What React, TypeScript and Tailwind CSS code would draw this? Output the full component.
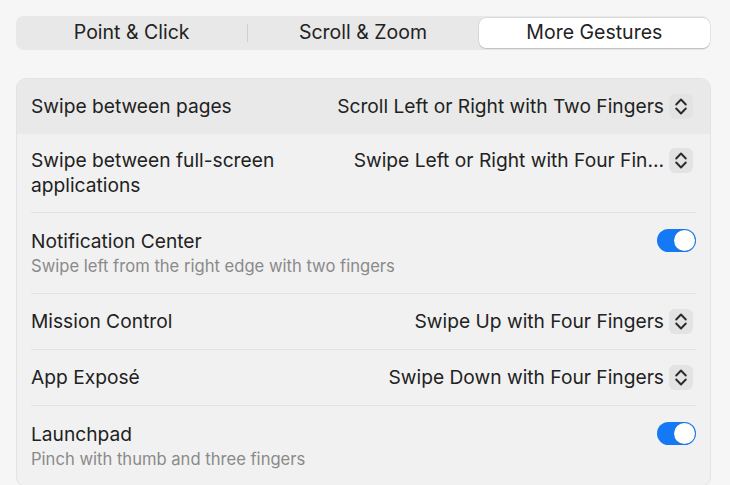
import React from "react";

function Stepper() {
  return (
    <div className="ml-[5px] mr-[3px] flex h-[25px] w-[24px] shrink-0 items-center justify-center rounded-[6px] bg-[#e3e3e3]">
      <svg width="14" height="19" viewBox="0 0 14 19" fill="none">
        <path d="M2.2 7.5 L7 2.5 L11.8 7.5" stroke="#2a2a2a" strokeWidth="1.9" strokeLinecap="round" strokeLinejoin="round" />
        <path d="M2.2 11.5 L7 16.5 L11.8 11.5" stroke="#2a2a2a" strokeWidth="1.9" strokeLinecap="round" strokeLinejoin="round" />
      </svg>
    </div>
  );
}

function Toggle() {
  return (
    <div className="flex h-[23px] w-[39px] shrink-0 items-center justify-end rounded-full bg-[#1579f6] pr-[1px]">
      <div className="h-[21px] w-[21px] rounded-full bg-white shadow-[0_0_1px_rgba(0,0,0,0.3)]" />
    </div>
  );
}

function Divider() {
  return <div className="mx-[14px] h-px bg-[#e3e3e3]" />;
}

export default function App() {
  return (
    <div
      className="h-[485px] w-[730px] overflow-hidden bg-[#f6f6f6] px-4 pt-4 text-[#222222]"
      style={{ fontFamily: "Inter, 'Noto Sans', sans-serif" }}
    >
      <div className="grid h-[34px] w-[694px] grid-cols-3 items-center rounded-[8px] bg-[#e8e8e8] text-[19.5px]">
        <div className="flex h-full items-center justify-center">Point &amp; Click</div>
        <div className="relative flex h-full items-center justify-center">
          <div className="absolute left-0 top-[8px] h-[18px] w-px bg-[#cfcfcf]" />
          Scroll &amp; Zoom
        </div>
        <div className="flex h-[30px] items-center justify-center rounded-[7px] bg-white shadow-[0_0_0_0.5px_rgba(0,0,0,0.12),0_1px_1px_rgba(0,0,0,0.12)]">
          More Gestures
        </div>
      </div>

      <div className="mt-7 w-[695px] overflow-hidden rounded-[10px] border border-[#e3e3e3] bg-[#f1f1f1] text-[19.2px]">
        <div className="flex h-[55px] items-center bg-[#e9e9e9] px-[14px]">
          <div className="flex-1">Swipe between pages</div>
          <div className="whitespace-nowrap">Scroll Left or Right with Two Fingers</div>
          <Stepper />
        </div>
        <div className="flex h-[78px] items-start px-[14px] pt-[14px]">
          <div className="w-[290px] leading-[25px]">Swipe between full-screen applications</div>
          <div className="flex flex-1 items-center justify-end">
            <div className="whitespace-nowrap leading-[25px]">Swipe Left or Right with Four Fin…</div>
            <Stepper />
          </div>
        </div>
        <Divider />
        <div className="flex h-[80px] items-start px-[14px] pt-[15px]">
          <div className="flex-1">
            <div className="leading-[26px]">Notification Center</div>
            <div className="text-[16.6px] leading-[24px] text-[#8a8a8a]">Swipe left from the right edge with two fingers</div>
          </div>
          <div className="mt-[1px]">
            <Toggle />
          </div>
        </div>
        <Divider />
        <div className="flex h-[55px] items-center px-[14px]">
          <div className="flex-1">Mission Control</div>
          <div className="whitespace-nowrap">Swipe Up with Four Fingers</div>
          <Stepper />
        </div>
        <Divider />
        <div className="flex h-[55px] items-center px-[14px]">
          <div className="flex-1">App Exposé</div>
          <div className="whitespace-nowrap">Swipe Down with Four Fingers</div>
          <Stepper />
        </div>
        <Divider />
        <div className="flex h-[80px] items-start px-[14px] pt-[15px]">
          <div className="flex-1">
            <div className="leading-[26px]">Launchpad</div>
            <div className="text-[16.6px] leading-[24px] text-[#8a8a8a]">Pinch with thumb and three fingers</div>
          </div>
          <div className="mt-[1px]">
            <Toggle />
          </div>
        </div>
      </div>
    </div>
  );
}
